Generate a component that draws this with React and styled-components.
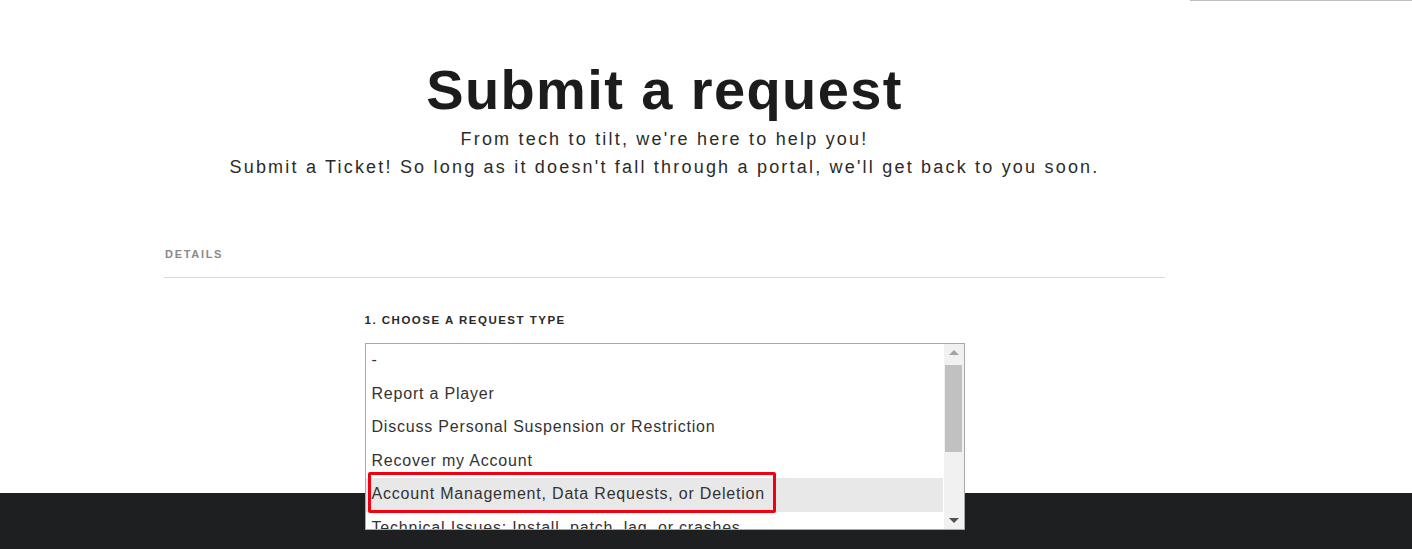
import React from 'react';
import styled, { createGlobalStyle } from 'styled-components';

const GlobalStyle = createGlobalStyle`
  html, body {
    margin: 0;
    padding: 0;
    background: #fff;
    font-family: "Liberation Sans", Arial, sans-serif;
  }
`;

const requestTypes = [
  '-',
  'Report a Player',
  'Discuss Personal Suspension or Restriction',
  'Recover my Account',
  'Account Management, Data Requests, or Deletion',
  'Technical Issues: Install, patch, lag, or crashes',
];

const App = () => {
  return (
    <Page>
      <GlobalStyle />
      <TopBar>
        <span className="rule" />
      </TopBar>

      <Main>
        <Hero>
          <h1>Submit a request</h1>
          <p>From tech to tilt, we're here to help you!</p>
          <p>Submit a Ticket! So long as it doesn't fall through a portal, we'll get back to you soon.</p>
        </Hero>

        <Section>
          <SectionTitle>Details</SectionTitle>
        </Section>

        <Form>
          <Label>1. Choose a request type</Label>
          <Picker>
            <Options>
              {requestTypes.map((t, i) => (
                <Option key={t} $active={i === 4}>{t}</Option>
              ))}
            </Options>
            <Scrollbar>
              <Arrow $up />
              <Thumb />
              <Arrow />
            </Scrollbar>
            <Marker />
          </Picker>
        </Form>
      </Main>

      <Footer />
    </Page>
  );
};

const Page = styled.div`
  display: flex;
  flex-direction: column;
  min-height: 549px;
`;

const TopBar = styled.div`
  display: flex;
  justify-content: flex-end;
  height: 1px;

  .rule {
    width: 222px;
    height: 1px;
    background: #bdbdbd;
  }
`;

const Main = styled.main`
  width: 1001px;
  margin-left: 164px;
  height: 492px;
`;

const Hero = styled.div`
  text-align: center;
  padding-top: 58px;
  color: #222;

  h1 {
    margin: 0 0 4px;
    font-size: 56px;
    line-height: 62px;
    font-weight: 700;
    letter-spacing: 1.4px;
    color: #1c1c1c;
  }

  p {
    margin: 0;
    font-size: 18px;
    line-height: 28px;
    letter-spacing: 2.2px;
    color: #2b2b2b;
  }
`;

const Section = styled.div`
  margin-top: 65px;
  padding-bottom: 15px;
  border-bottom: 1px solid #d8d8d8;
`;

const SectionTitle = styled.h3`
  margin: 0;
  padding-left: 1px;
  font-size: 11px;
  line-height: 16px;
  font-weight: 700;
  letter-spacing: 1.7px;
  text-transform: uppercase;
  color: #8a8a8a;
`;

const Form = styled.div`
  width: 600px;
  margin: 34px auto 0;
  position: relative;
`;

const Label = styled.label`
  display: block;
  font-size: 11.5px;
  line-height: 16px;
  font-weight: 700;
  letter-spacing: 1.5px;
  text-transform: uppercase;
  color: #2a2a2a;
`;

const Picker = styled.div`
  position: absolute;
  top: 31px;
  left: 0;
  width: 598px;
  height: 185px;
  border: 1px solid #a9a9a9;
  background: #fff;
  display: flex;
  overflow: hidden;
  z-index: 2;
`;

const Options = styled.ul`
  flex: 1;
  margin: 0;
  padding: 0;
  list-style: none;
`;

const Option = styled.li`
  height: 33.5px;
  line-height: 31.5px;
  padding-left: 6px;
  font-size: 16px;
  letter-spacing: 0.8px;
  color: #333;
  white-space: nowrap;
  background: ${(p) => (p.$active ? '#e8e8e8' : 'transparent')};
`;

const Scrollbar = styled.div`
  width: 20px;
  margin-left: 1px;
  background: #f1f1f1;
  display: flex;
  flex-direction: column;
  align-items: center;
`;

const Arrow = styled.div`
  height: 17px;
  width: 100%;
  display: flex;
  align-items: center;
  justify-content: center;

  &::before {
    content: '';
    border-left: 5px solid transparent;
    border-right: 5px solid transparent;
    ${(p) =>
      p.$up
        ? 'border-bottom: 5px solid #a3a3a3;'
        : 'border-top: 5px solid #505050;'}
  }
`;

const Thumb = styled.div`
  width: 17px;
  height: 87px;
  margin-top: 4px;
  background: #c1c1c1;
  flex: none;
  margin-bottom: auto;
`;

const Marker = styled.div`
  position: absolute;
  left: 2px;
  top: 128px;
  width: 402px;
  height: 35px;
  border: 3px solid #f00010;
  border-radius: 2px;
`;

const Footer = styled.footer`
  flex: 1;
  background: #1e1f21;
`;

export default App;
